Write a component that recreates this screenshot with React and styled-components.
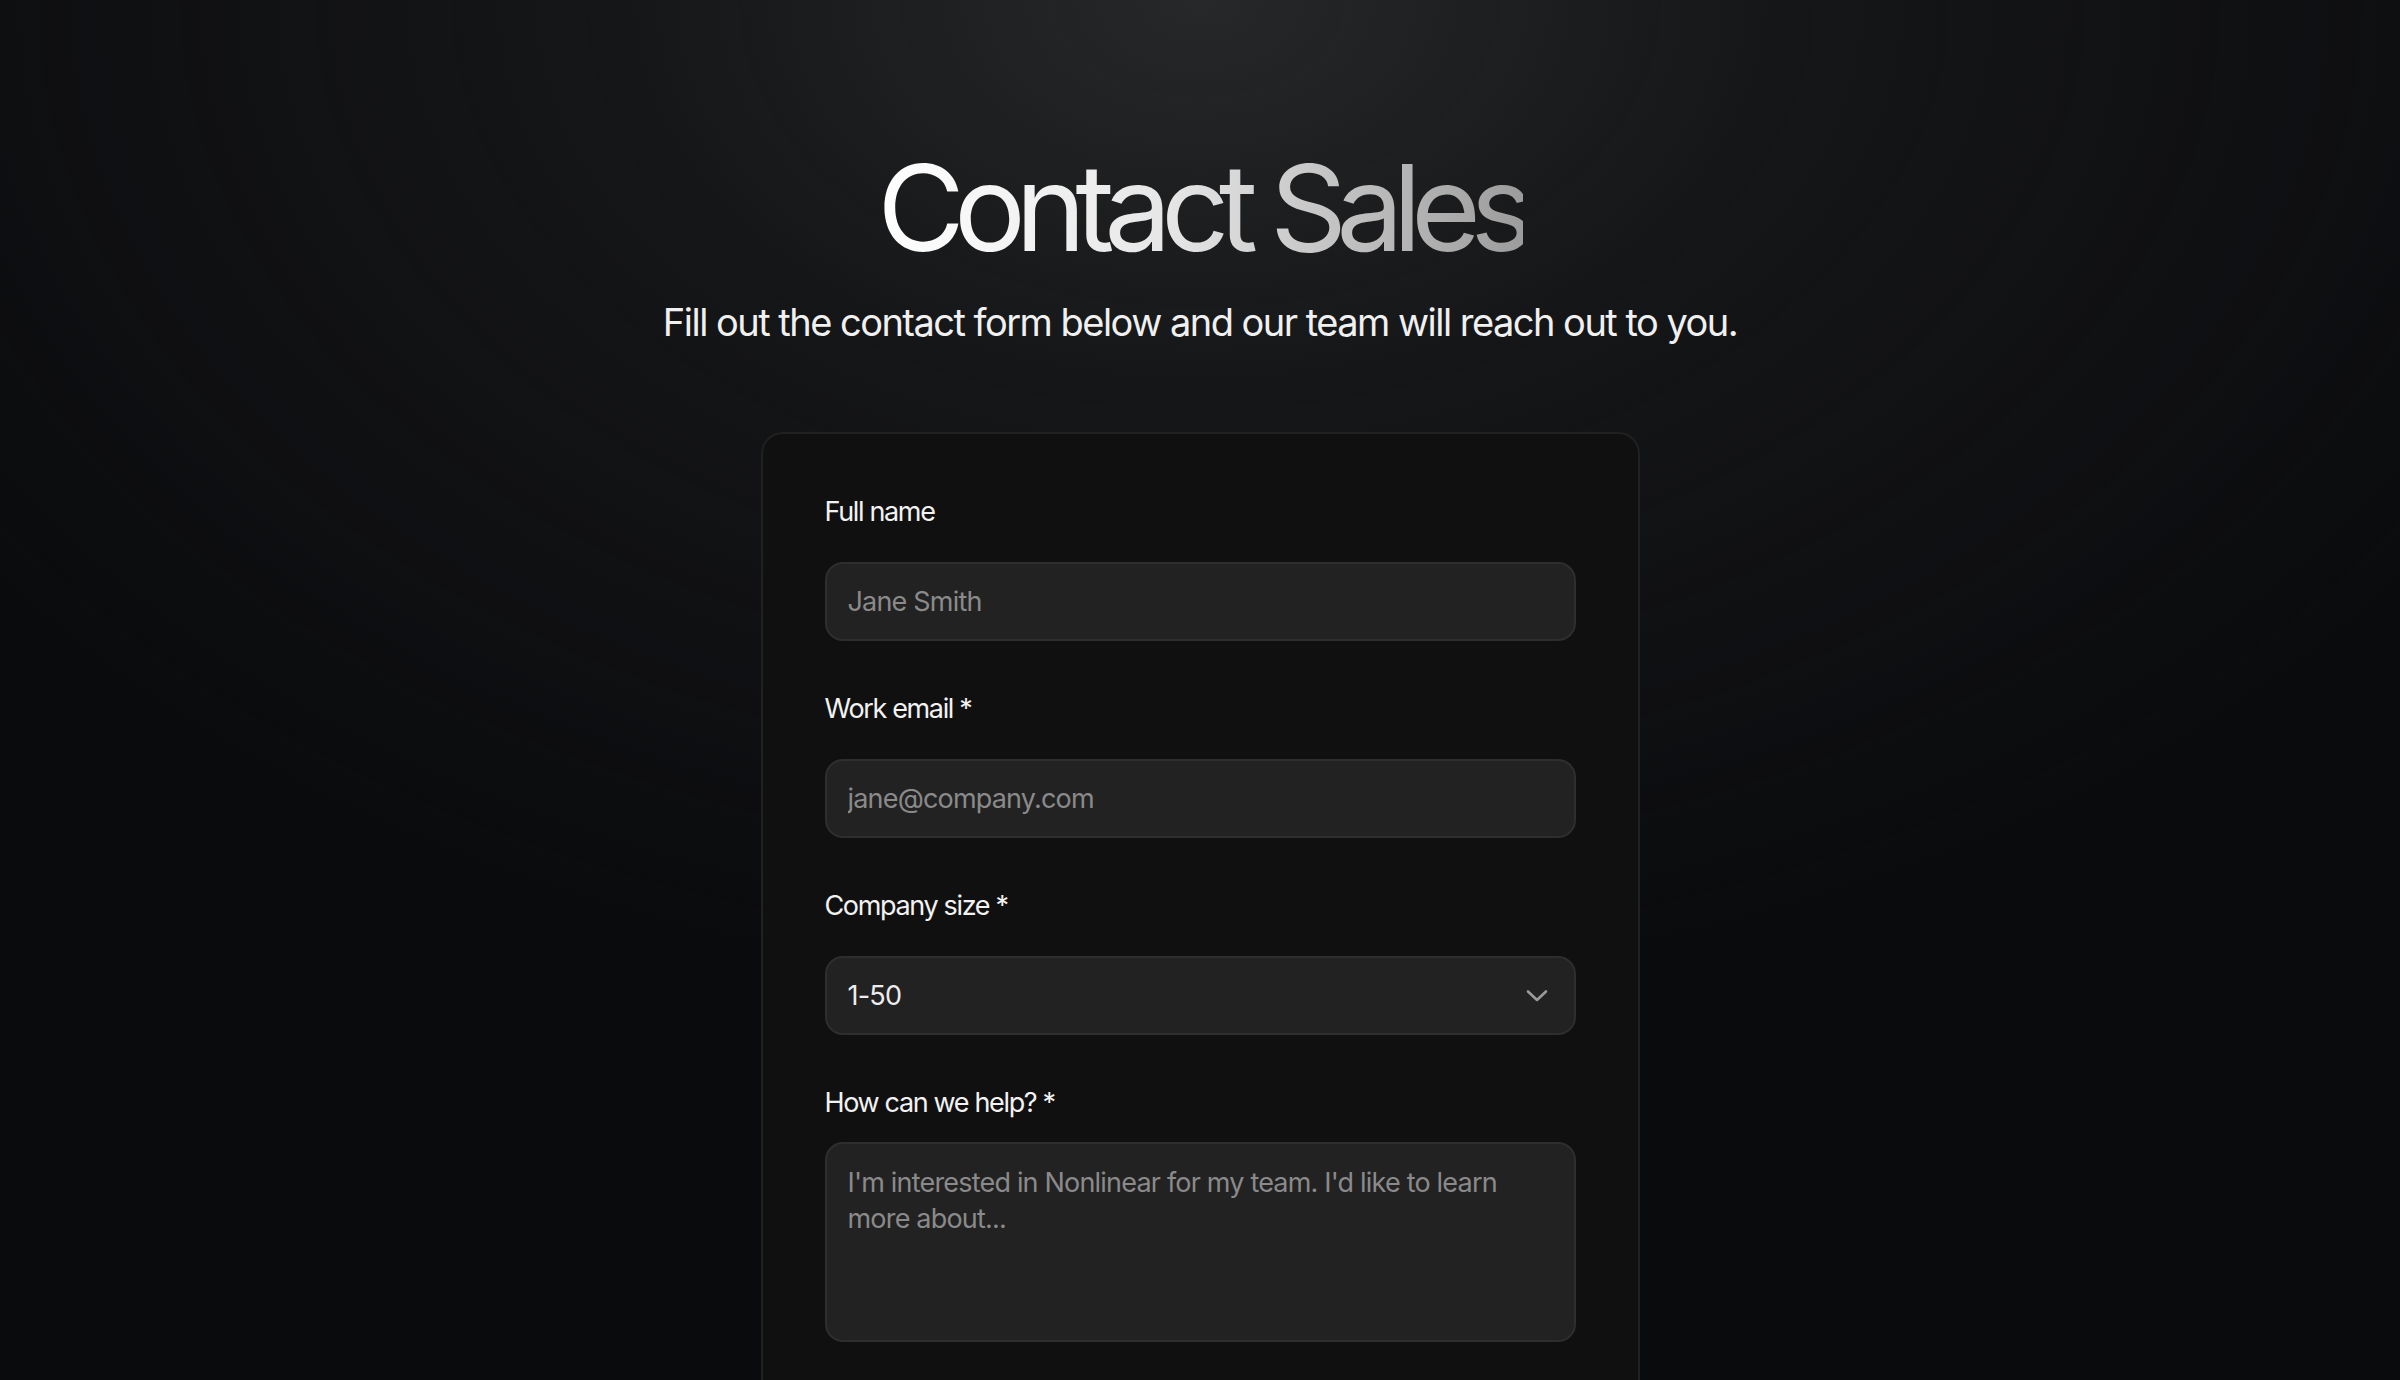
import React from "react";
import styled, { createGlobalStyle } from "styled-components";

const GlobalStyle = createGlobalStyle`
    html, body {
        margin: 0;
        padding: 0;
        background: #0a0b0d;
    }
    * {
        box-sizing: border-box;
    }
`;

const sizes = ["1-50", "51-200", "201-1000", "1000+"];

const ChevronDown = () => (
    <svg width="22" height="14" viewBox="0 0 22 14" fill="none">
        <path
            d="M2 2.5L11 11L20 2.5"
            stroke="#9a9a9a"
            strokeWidth="2.6"
            strokeLinecap="round"
            strokeLinejoin="round"
        />
    </svg>
);

const App = () => {
    const [form, setForm] = React.useState({
        name: "",
        email: "",
        size: "1-50",
        message: "",
    });

    const handleChange = (ev) => {
        const { name, value } = ev.target;
        setForm((prev) => ({ ...prev, [name]: value }));
    };

    return (
        <Page>
            <GlobalStyle />
            <Header>
                <Title>Contact Sales</Title>
                <Subtitle>
                    Fill out the contact form below and our team will reach out to you.
                </Subtitle>
            </Header>

            <Card onSubmit={(ev) => ev.preventDefault()}>
                <Field>
                    <Label htmlFor="name">Full name</Label>
                    <Input
                        id="name"
                        name="name"
                        type="text"
                        value={form.name}
                        onChange={handleChange}
                        placeholder="Jane Smith"
                    />
                </Field>

                <Field>
                    <Label htmlFor="email">Work email *</Label>
                    <Input
                        id="email"
                        name="email"
                        type="email"
                        value={form.email}
                        onChange={handleChange}
                        placeholder="jane@company.com"
                    />
                </Field>

                <Field>
                    <Label htmlFor="size">Company size *</Label>
                    <SelectWrap>
                        <Select id="size" name="size" value={form.size} onChange={handleChange}>
                            {sizes.map((s) => (
                                <option key={s} value={s}>
                                    {s}
                                </option>
                            ))}
                        </Select>
                        <SelectIcon>
                            <ChevronDown />
                        </SelectIcon>
                    </SelectWrap>
                </Field>

                <Field $tight>
                    <Label htmlFor="message">How can we help? *</Label>
                    <TextArea
                        id="message"
                        name="message"
                        value={form.message}
                        onChange={handleChange}
                        placeholder="I'm interested in Nonlinear for my team. I'd like to learn more about..."
                    />
                </Field>
            </Card>
        </Page>
    );
};

export default App;

const Page = styled.main`
    min-height: 100vh;
    padding: 148px 0 120px;
    font-family: Inter, "Noto Sans", "Liberation Sans", sans-serif;
    color: #f2f2f2;
    background:
        radial-gradient(ellipse 1500px 1000px at 50% 0%, rgba(40, 41, 42, 0.95) 0%, rgba(28, 29, 31, 0.6) 40%, rgba(10, 11, 13, 0) 100%),
        #0a0b0d;
`;

const Header = styled.header`
    display: flex;
    flex-direction: column;
    align-items: center;
    text-align: center;
`;

const Title = styled.h1`
    display: inline-block;
    margin: 0;
    font-size: 120px;
    line-height: 1;
    font-weight: 400;
    letter-spacing: -0.09em;
    background: linear-gradient(90deg, #ffffff 0%, #e6e6e6 45%, #9c9c9c 100%);
    -webkit-background-clip: text;
    background-clip: text;
    color: transparent;
`;

const Subtitle = styled.p`
    margin: 30px 0 0;
    font-size: 38px;
    line-height: 1.3;
    font-weight: 400;
    letter-spacing: -0.04em;
    color: #f0f0f0;
`;

const Card = styled.form`
    width: 879px;
    margin: 85px auto 0;
    padding: 58px 62px 80px;
    display: flex;
    flex-direction: column;
    gap: 48px;
    background: #101010;
    border: 2px solid #212121;
    border-radius: 22px;
`;

const Field = styled.div`
    display: flex;
    flex-direction: column;
    gap: ${(props) => (props.$tight ? "19px" : "30px")};
`;

const Label = styled.label`
    font-size: 27px;
    line-height: 40px;
    letter-spacing: -0.05em;
    color: #f2f2f2;
`;

const inputBase = `
    width: 100%;
    margin: 0;
    font-family: Inter, "Noto Sans", "Liberation Sans", sans-serif;
    font-size: 27px;
    letter-spacing: -0.03em;
    color: #ededed;
    background: #222222;
    border: 2px solid #2e2e2e;
    border-radius: 18px;
    outline: none;

    &::placeholder {
        color: #8a8a8a;
    }
`;

const Input = styled.input`
    ${inputBase}
    height: 79px;
    padding: 0 21px;
`;

const SelectWrap = styled.div`
    position: relative;
`;

const Select = styled.select`
    ${inputBase}
    height: 79px;
    padding: 0 64px 0 21px;
    appearance: none;
    -webkit-appearance: none;
    cursor: pointer;
`;

const SelectIcon = styled.span`
    position: absolute;
    right: 28px;
    top: 50%;
    transform: translateY(-50%);
    display: flex;
    pointer-events: none;
`;

const TextArea = styled.textarea`
    ${inputBase}
    height: 200px;
    padding: 21px 21px;
    line-height: 36px;
    resize: none;
`;
